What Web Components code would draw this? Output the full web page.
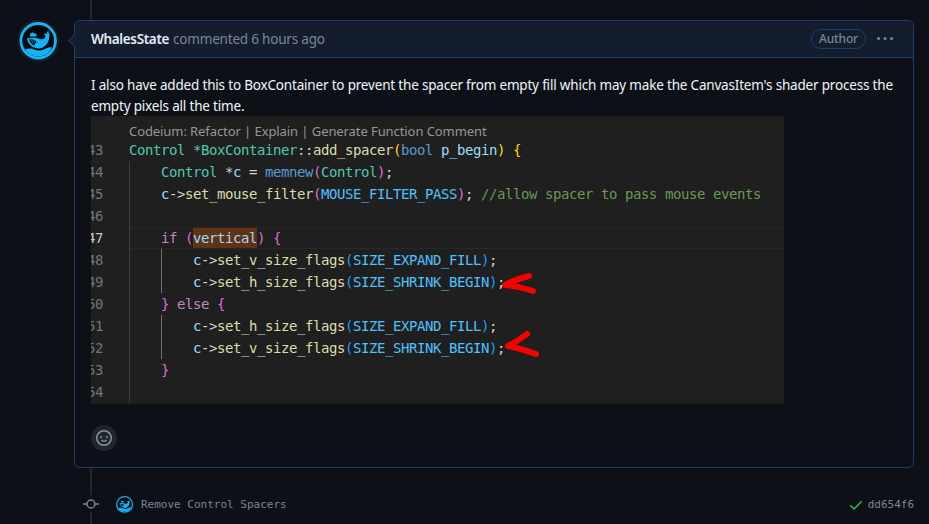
<!DOCTYPE html>
<html>
<head>
<meta charset="utf-8">
<style>
html, body { margin: 0; background: #0d1117; }
body { width: 929px; height: 524px; overflow: hidden; font-family: "Noto Sans", "Liberation Sans", sans-serif; }
</style>
</head>
<body>
<timeline-page>
  <comment-card author="WhalesState" when="commented 6 hours ago">
    <p>I also have added this to BoxContainer to prevent the spacer from empty fill which may make the CanvasItem's shader process the empty pixels all the time.</p>
    <code-view></code-view>
  </comment-card>
  <commit-row message="Remove Control Spacers" sha="dd654f6"></commit-row>
</timeline-page>

<script>
class WhaleAvatar extends HTMLElement {
    constructor() {
        super()
        this.attachShadow({mode: 'open'}).innerHTML = `
        <style>
        :host { display: block; width: var(--size, 42px); height: var(--size, 42px); flex: none; }
        svg { display: block; width: 100%; height: 100%; }
        </style>
        <svg viewBox="18 19 42 42">
            <circle cx="39.2" cy="39.8" r="20.3" fill="#0d1117" stroke="#21262d" stroke-width="1"/>
            <circle cx="39.2" cy="39.8" r="17.3" fill="#04090f" stroke="#12b4f3" stroke-width="2.8"/>
            <path fill="#12b4f3" d="M28 37.5C32 36.5 37 36.5 41 38C44 39 46 37.5 46.5 35L44.5 32.5L47.5 33L49 29.5L50.5 34C50.8 40 47 47 40 47.5C34 47.5 29 43.5 28 37.5Z"/>
            <path fill="#04090f" d="M30 38.5C32 38 35.5 38.5 37.5 40.5C36.8 42.5 35.5 44 34.5 44.5C32.5 43 31 41 30 38.5Z"/>
            <path fill="none" stroke="#12b4f3" stroke-width=".6" d="M32.4 38.6L34.6 43.4M35 39.2L35.8 42"/>
            <path fill="#12b4f3" d="M31 34.8V32.5H32.5V31.5H34.5V32.5H37.5V35.5H31Z"/>
            <path fill="#12b4f3" d="M26 48.5C29 47 33 47 35.5 48.8C39.5 50 44 49.5 47 47.5C49 46.5 51 46 53 46.5C51 52 46 55.5 39.3 55.5C32.5 55.5 28 52.5 26 48.5Z"/>
        </svg>
        `
    }
}

class CommentCard extends HTMLElement {
    constructor() {
        super()
        this.attachShadow({mode: 'open'}).innerHTML = `
        <style>
        :host { display: flex; align-items: flex-start; padding-left: 17px; gap: 15px; }
        .box {
            position: relative;
            width: 838px;
            height: 446px;
            border: 1px solid #1f3d6e;
            border-radius: 6px;
            display: flex;
            flex-direction: column;
        }
        .box::before {
            content: '';
            position: absolute;
            left: -5px;
            top: 15px;
            width: 8px;
            height: 8px;
            background: #131d2e;
            border-left: 1px solid #1f3d6e;
            border-bottom: 1px solid #1f3d6e;
            transform: rotate(45deg);
        }
        header {
            height: 36px;
            background: #131d2e;
            border-bottom: 1px solid #1f3d6e;
            border-radius: 5px 5px 0 0;
            display: flex;
            align-items: center;
            padding: 0 20px 0 16px;
            font-size: 13.5px;
            letter-spacing: -0.2px;
            color: #7d8590;
        }
        b { font-weight: 600; color: #e6edf3; margin-right: 4px; letter-spacing: -0.35px; }
        .badge {
            margin-left: auto;
            height: 18px;
            line-height: 17px;
            padding: 0 7px;
            border: 1px solid #1f3d6e;
            border-radius: 10px;
            font-size: 12px;
            font-weight: 500;
            letter-spacing: -0.15px;
        }
        .more { margin-left: 11px; width: 16px; height: 16px; fill: #7d8590; }
        .body { padding: 17px 16px 0; color: #f0f6fc; line-height: 21px; }
        ::slotted(p) { margin: 0; font-size: 13.5px; letter-spacing: -0.185px; }
        .react {
            margin: 21px 0 0 16px;
            width: 26px;
            height: 26px;
            border-radius: 50%;
            background: #21262d;
            display: flex;
            align-items: center;
            justify-content: center;
        }
        .react svg { width: 16px; height: 16px; fill: #8b949e; }
        </style>
        <whale-avatar></whale-avatar>
        <div class="box">
            <header>
                <b id="author"></b><span id="when"></span>
                <span class="badge">Author</span>
                <svg class="more" viewBox="0 0 16 16"><path d="M8 9a1.5 1.5 0 1 0 0-3 1.5 1.5 0 0 0 0 3ZM1.5 9a1.5 1.5 0 1 0 0-3 1.5 1.5 0 0 0 0 3Zm13 0a1.5 1.5 0 1 0 0-3 1.5 1.5 0 0 0 0 3Z"/></svg>
            </header>
            <div class="body"><slot></slot></div>
            <div class="react">
                <svg viewBox="0 0 16 16"><path d="M8 0a8 8 0 1 1 0 16A8 8 0 0 1 8 0ZM1.5 8a6.5 6.5 0 1 0 13 0 6.5 6.5 0 0 0-13 0Zm3.82 1.636a.75.75 0 0 1 1.038.175l.007.009c.103.118.22.222.35.31.264.178.683.37 1.285.37.602 0 1.02-.192 1.285-.371.13-.088.247-.192.35-.31l.007-.008a.75.75 0 0 1 1.222.87c-.02.03-.06.08-.2.24-.16.166-.338.316-.53.445-.63.418-1.37.638-2.127.629-.946 0-1.652-.308-2.126-.63a3.331 3.331 0 0 1-.715-.657.75.75 0 0 1 .182-1.072ZM6 7a1 1 0 1 1-2 0 1 1 0 0 1 2 0Zm6 0a1 1 0 1 1-2 0 1 1 0 0 1 2 0Z"/></svg>
            </div>
        </div>
        `
        this.shadowRoot.querySelector('#author').textContent = this.getAttribute('author')
        this.shadowRoot.querySelector('#when').textContent = this.getAttribute('when')
    }
}

class CodeView extends HTMLElement {
    constructor() {
        super()
        this.attachShadow({mode: 'open'}).innerHTML = `
        <style>
        :host {
            display: block;
            position: relative;
            width: 693px;
            height: 288px;
            margin-top: -1px;
            background: #1f1f1f;
            overflow: hidden;
            font-family: "DejaVu Sans Mono", monospace;
            font-size: 14px;
            letter-spacing: -0.43px;
            color: #d4d4d4;
        }
        .lens {
            height: 23px;
            padding: 6px 0 0 38px;
            box-sizing: border-box;
            font-family: "Noto Sans", sans-serif;
            font-size: 13px;
            line-height: 18px;
            letter-spacing: -0.08px;
            color: #969696;
        }
        .row { display: flex; height: 22px; line-height: 23px; white-space: pre; }
        .n {
            width: 12px;
            margin-right: 26px;
            flex: none;
            display: flex;
            justify-content: flex-end;
            color: #6e7681;
        }
        .g { width: 32px; flex: none; box-sizing: border-box; border-left: 1px solid #404040; }
        .g.on { border-left-color: #707070; }
        .c { flex: 1; }
        .cur .c, .cur .g { box-shadow: inset 0 1px #282828, inset 0 -1px #282828; }
        .cur .n { color: #c6c6c6; }
        .hl { display: inline-block; height: 20px; line-height: 21px; background: #613214; vertical-align: top; margin-top: 1px; }
        .t { color: #4ec9b0; } .k { color: #c586c0; } .f { color: #dcdcaa; } .v { color: #9cdcfe; }
        .m { color: #569cd6; } .o { color: #4fc1ff; } .s { color: #6a9955; }
        .y { color: #ffd700; } .p { color: #da70d6; } .b { color: #179fff; }
        svg { position: absolute; left: 0; top: 0; }
        </style>
        <div class="lens">Codeium: Refactor | Explain | Generate Function Comment</div>
        <div class="row"><span class="n">43</span><span class="c"><span class="t">Control</span> <span class="t">*BoxContainer</span>::<span class="f">add_spacer</span><span class="y">(</span><span class="m">bool</span> <span class="v">p_begin</span><span class="y">)</span> <span class="y">{</span></span></div>
        <div class="row"><span class="n">44</span><span class="g"></span><span class="c"><span class="t">Control</span> *<span class="v">c</span> = <span class="m">memnew</span><span class="p">(</span><span class="t">Control</span><span class="p">)</span>;</span></div>
        <div class="row"><span class="n">45</span><span class="g"></span><span class="c"><span class="v">c</span>-&gt;<span class="f">set_mouse_filter</span><span class="p">(</span><span class="o">MOUSE_FILTER_PASS</span><span class="p">)</span>; <span class="s">//allow spacer to pass mouse events</span></span></div>
        <div class="row"><span class="n">46</span><span class="g"></span><span class="c"></span></div>
        <div class="row cur"><span class="n">47</span><span class="g"></span><span class="c"><span class="k">if</span> <span class="p">(</span><span class="v hl">vertical</span><span class="p">)</span> <span class="p">{</span></span></div>
        <div class="row"><span class="n">48</span><span class="g"></span><span class="g on"></span><span class="c"><span class="v">c</span>-&gt;<span class="f">set_v_size_flags</span><span class="b">(</span><span class="o">SIZE_EXPAND_FILL</span><span class="b">)</span>;</span></div>
        <div class="row"><span class="n">49</span><span class="g"></span><span class="g on"></span><span class="c"><span class="v">c</span>-&gt;<span class="f">set_h_size_flags</span><span class="b">(</span><span class="o">SIZE_SHRINK_BEGIN</span><span class="b">)</span>;</span></div>
        <div class="row"><span class="n">50</span><span class="g"></span><span class="c"><span class="p">}</span> <span class="k">else</span> <span class="p">{</span></span></div>
        <div class="row"><span class="n">51</span><span class="g"></span><span class="g on"></span><span class="c"><span class="v">c</span>-&gt;<span class="f">set_h_size_flags</span><span class="b">(</span><span class="o">SIZE_EXPAND_FILL</span><span class="b">)</span>;</span></div>
        <div class="row"><span class="n">52</span><span class="g"></span><span class="g on"></span><span class="c"><span class="v">c</span>-&gt;<span class="f">set_v_size_flags</span><span class="b">(</span><span class="o">SIZE_SHRINK_BEGIN</span><span class="b">)</span>;</span></div>
        <div class="row"><span class="n">53</span><span class="g"></span><span class="c"><span class="p">}</span></span></div>
        <div class="row"><span class="n">54</span><span class="g"></span><span class="c"></span></div>
        <!-- red marker scribbles, in page coordinates -->
        <svg width="693" height="288" viewBox="91 116 693 288" fill="none" stroke="#f60000" stroke-width="6" stroke-linecap="round" stroke-linejoin="round">
            <path d="M529 276Q516 279 505 285Q519 286 533 291"/>
            <path d="M527 334Q518 341 508 346Q522 349 536 354"/>
        </svg>
        `
    }
}

class CommitRow extends HTMLElement {
    constructor() {
        super()
        this.attachShadow({mode: 'open'}).innerHTML = `
        <style>
        :host {
            display: flex;
            align-items: center;
            box-sizing: border-box;
            height: 56px;
            padding: 17px 15px 0 82px;
            font-family: "DejaVu Sans Mono", monospace;
            font-size: 11px;
            color: #7d8590;
            --size: 19px;
        }
        .rail { width: 18px; height: 56px; flex: none; margin: -17px 15px 0 0; }
        .msg { margin-left: 7px; }
        .check { margin-left: auto; width: 16px; height: 16px; fill: #3fb950; margin-right: 4px; }
        </style>
        <svg class="rail" viewBox="0 0 18 56">
            <path d="M9 0V27M9 44V56" stroke="#21262d" stroke-width="2"/>
            <circle cx="9" cy="36" r="4" fill="none" stroke="#7d8590" stroke-width="1.5"/>
            <path d="M1 36H5M13 36H17" stroke="#7d8590" stroke-width="1.5"/>
        </svg>
        <whale-avatar></whale-avatar>
        <span class="msg" id="msg"></span>
        <svg class="check" viewBox="0 0 16 16"><path d="M13.78 4.22a.75.75 0 0 1 0 1.06l-7.25 7.25a.75.75 0 0 1-1.06 0L2.22 9.28a.751.751 0 0 1 .018-1.042.751.751 0 0 1 1.042-.018L6 10.94l6.72-6.72a.75.75 0 0 1 1.06 0Z"/></svg>
        <span id="sha"></span>
        `
        this.shadowRoot.querySelector('#msg').textContent = this.getAttribute('message')
        this.shadowRoot.querySelector('#sha').textContent = this.getAttribute('sha')
    }
}

class TimelinePage extends HTMLElement {
    constructor() {
        super()
        this.attachShadow({mode: 'open'}).innerHTML = `
        <style>
        :host { display: block; width: 929px; }
        .stub { height: 20px; margin-left: 90px; width: 2px; background: #21262d; }
        </style>
        <div class="stub"></div>
        <slot></slot>
        `
    }
}

customElements.define('whale-avatar', WhaleAvatar)
customElements.define('comment-card', CommentCard)
customElements.define('code-view', CodeView)
customElements.define('commit-row', CommitRow)
customElements.define('timeline-page', TimelinePage)
</script>
</body>
</html>
